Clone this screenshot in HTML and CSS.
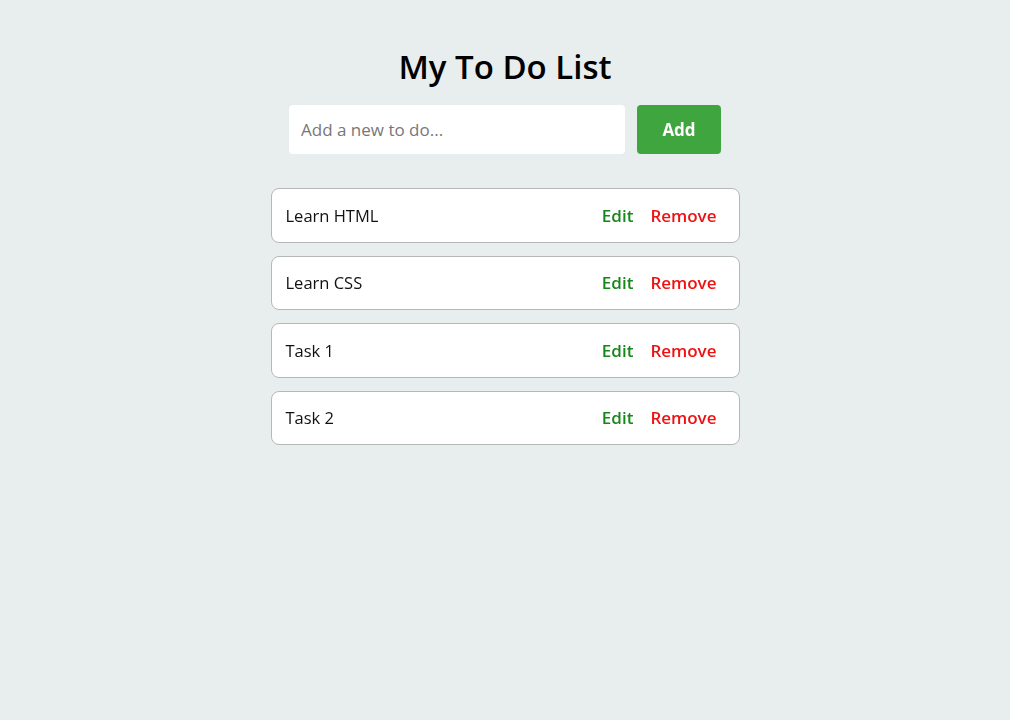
FILE: index.html
```html
<!DOCTYPE html>
<html lang="en">
<head>
<meta charset="utf-8">
<title>My To Do List</title>
<link rel="stylesheet" href="styles.css">
</head>
<body>
<main class="app">
  <h1 class="title">My To Do List</h1>
  <form class="add-form">
    <input class="add-input" type="text" placeholder="Add a new to do..." autofocus>
    <button class="add-btn" type="button">Add</button>
  </form>
  <ul class="list">
    <li class="item"><span class="item-text">Learn HTML</span><span class="actions"><button class="edit">Edit</button><button class="remove">Remove</button></span></li>
    <li class="item"><span class="item-text">Learn CSS</span><span class="actions"><button class="edit">Edit</button><button class="remove">Remove</button></span></li>
    <li class="item"><span class="item-text">Task 1</span><span class="actions"><button class="edit">Edit</button><button class="remove">Remove</button></span></li>
    <li class="item"><span class="item-text">Task 2</span><span class="actions"><button class="edit">Edit</button><button class="remove">Remove</button></span></li>
  </ul>
</main>
</body>
</html>
```
FILE: styles.css
```css
* { box-sizing: border-box; }
html, body { margin: 0; padding: 0; }
body {
  background: #e8eded;
  font-family: "Open Sans", "Noto Sans", sans-serif;
  color: #111;
  min-height: 720px;
}
.app {
  display: flex;
  flex-direction: column;
  align-items: center;
  padding-top: 44px;
}
.title {
  margin: 0;
  font-size: 33px;
  font-weight: 600;
  line-height: 46px;
  color: #000;
}
.add-form {
  display: flex;
  gap: 12px;
  margin-top: 15px;
}
.add-input {
  width: 336px;
  height: 49px;
  border: none;
  border-radius: 4px;
  background: #fff;
  padding: 0 12px;
  font-family: inherit;
  font-size: 17px;
  outline: none;
  caret-color: #555;
}
.add-input::placeholder { color: #777; }
.add-btn {
  width: 84px;
  height: 49px;
  border: none;
  border-radius: 4px;
  background: #3ea53f;
  color: #fff;
  font-family: inherit;
  font-size: 17px;
  font-weight: 700;
}
.list {
  list-style: none;
  margin: 34px 0 0;
  padding: 0;
  width: 469px;
  display: flex;
  flex-direction: column;
  gap: 13px;
}
.item {
  height: 54.5px;
  background: #fff;
  border: 1px solid #b5b8b8;
  border-radius: 8px;
  display: flex;
  align-items: center;
  justify-content: space-between;
  padding: 0 22px 0 14px;
  font-size: 16.5px;
}
.item-text { color: #111; }
.actions { display: flex; gap: 17px; }
.actions button {
  border: none;
  background: none;
  padding: 0;
  font-family: inherit;
  font-size: 17px;
  font-weight: 600;
  cursor: pointer;
}
.edit { color: #17871a; }
.remove { color: #ee1111; }
```
